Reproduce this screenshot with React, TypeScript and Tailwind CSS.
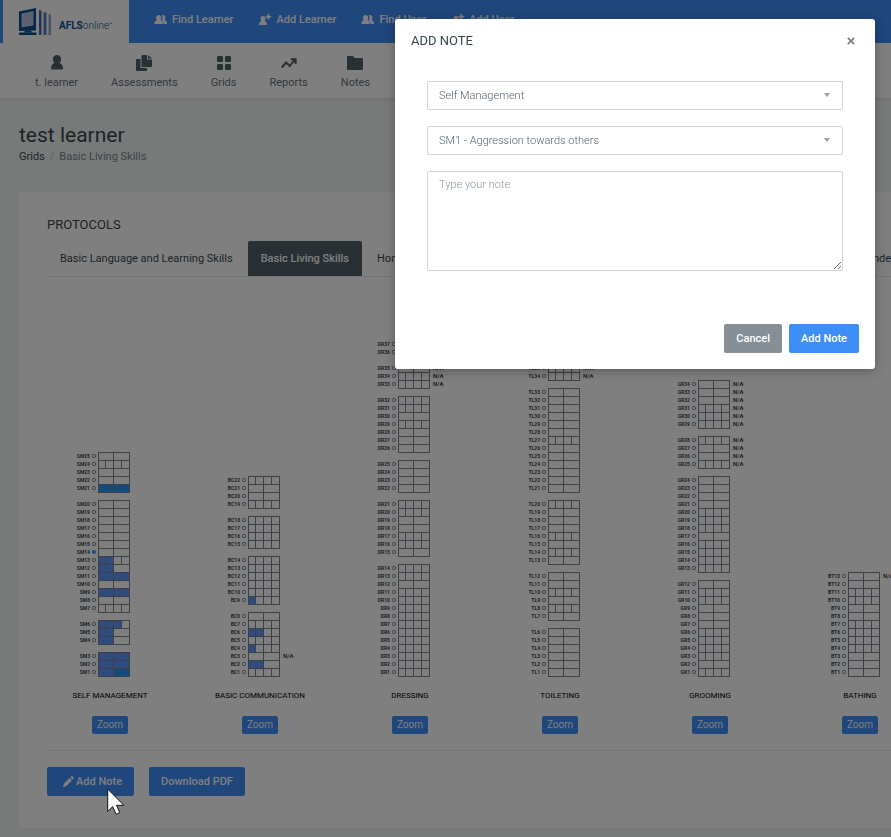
import type { ReactNode } from "react";

type Protocol = {
  title: string;
  prefix: string;
  groups: string[]; // one string per block, top row first, digit = boxes in the row
  fills?: Record<number, string[]>;
  na?: number[];
  dots?: number[];
};

const A = "#6296ff";
const B = "#2a96f5";

const protocols: Protocol[] = [
  {
    title: "SELF MANAGEMENT",
    prefix: "SM",
    groups: ["24222", "22222224222224", "422", "222"],
    fills: {
      21: [B, B],
      13: [A, A],
      12: [A],
      11: [A, A],
      9: [A, A],
      6: [A, A, A],
      5: [A],
      4: [A],
      3: [A, A],
      2: [A, A],
      1: [A, B],
    },
    dots: [14],
  },
  {
    title: "BASIC COMMUNICATION",
    prefix: "BC",
    groups: ["4224", "4444", "444444", "24444224"],
    fills: { 9: [A], 6: [A, A], 4: [A], 2: [A] },
    na: [3],
  },
  {
    title: "DRESSING",
    prefix: "DR",
    groups: ["22", "244", "4424222", "2222", "4422442", "44244444444444"],
    na: [35, 34, 33],
  },
  {
    title: "TOILETING",
    prefix: "TL",
    groups: ["44", "2222224222222", "42224242", "224242", "222222"],
    na: [35, 34],
  },
  {
    title: "GROOMING",
    prefix: "GR",
    groups: ["222444", "4224", "222244424444", "244222444424"],
    na: [34, 33, 32, 31, 30, 29, 28, 27, 26, 25],
  },
  {
    title: "BATHING",
    prefix: "BT",
    groups: ["2244224444222"],
    na: [13],
  },
];

const tabs = [
  "Basic Language and Learning Skills",
  "Basic Living Skills",
  "Home Skills",
  "Community Participation Skills",
  "School Skills",
  "Vocational Skills",
  "Independent Living Skills",
];

const LINE = "#76838f";
const EDGES: Record<string, number[]> = {
  "2": [0, 15, 31],
  "4": [0, 7, 15, 23, 31],
};

function ProtocolChart({ protocol }: { protocol: Protocol }) {
  const { groups, prefix, fills = {}, na = [], dots = [] } = protocol;
  const total = groups.join("").length;
  const height = (total + groups.length - 1) * 8 + 1;
  const rows: ReactNode[] = [];
  let y = 0;
  let n = total;

  groups.forEach((group) => {
    for (const kind of group) {
      const edges = EDGES[kind];
      const id = n;
      rows.push(
        <g key={id} transform={`translate(0 ${y})`}>
          <text x="55" y="6" textAnchor="end" fontSize="5" fontWeight="700" fill="#37474f">
            {prefix + id}
          </text>
          <circle
            cx="59"
            cy="4"
            r="1.7"
            fill={dots.includes(id) ? A : "none"}
            stroke={dots.includes(id) ? A : LINE}
            strokeWidth="0.9"
          />
          {(fills[id] || []).map((color, i) => (
            <rect key={i} x={63 + edges[i]} y="0" width={edges[i + 1] - edges[i]} height="8" fill={color} />
          ))}
          <path
            d={`M63 .5h32M63 8.5h32${edges.map((e) => `M${63.5 + e} 0v9`).join("")}`}
            stroke={LINE}
            fill="none"
          />
          {na.includes(id) && (
            <text x="98" y="6" fontSize="6" fontWeight="700" fill="#37474f">
              N/A
            </text>
          )}
        </g>
      );
      y += 8;
      n -= 1;
    }
    y += 8;
  });

  return (
    <svg width="150" height={height} viewBox={`0 0 150 ${height}`}>
      {rows}
    </svg>
  );
}

function UsersIcon() {
  return (
    <svg className="h-3 w-[13px]" viewBox="0 0 13 12" fill="currentColor">
      <path d="M9 1c1.500 0 2.400 1.100 2.400 2.600 0 1-.4 1.900-1 2.400C12 6.600 13 7.600 13 10H9.800C9.600 8.300 9 7.200 7.700 6.400c.6-.8.900-1.700.9-2.700 0-1-.3-1.800-.8-2.400C8.200 1.100 8.600 1 9 1z" />
      <path d="M4.700 1c1.600 0 2.600 1.200 2.600 2.700 0 1-.4 1.900-1 2.400C8 6.700 9 7.800 9 10H.3c0-2.200 1.100-3.300 2.800-3.900-.6-.5-1-1.400-1-2.400C2.100 2.200 3.100 1 4.700 1z" />
    </svg>
  );
}

function UserAddIcon() {
  return (
    <svg className="h-3 w-[13px]" viewBox="0 0 13 12" fill="currentColor">
      <path d="M5 2c1.600 0 2.500 1.100 2.500 2.600 0 1-.4 1.800-1 2.300C8.200 7.500 9.200 8.700 9.200 11H.8c0-2.300 1-3.500 2.700-4.100-.6-.5-1-1.300-1-2.300C2.500 3.100 3.400 2 5 2z" />
      <path d="M9.500 0h1.600v1.800H13v1.600h-1.900v1.800H9.500V3.400H7.700V1.800h1.800z" />
    </svg>
  );
}

const menu: { label: string; icon: ReactNode }[] = [
  {
    label: "t. learner",
    icon: <path d="M8 0c2.600 0 4.100 1.900 4.100 4.200 0 1.600-.6 3-1.600 3.800C12.800 8.800 14 10.500 14 13.500c0 .6-.5 1-1.100 1H3.100c-.6 0-1.100-.4-1.100-1C2 10.500 3.200 8.800 5.500 8 4.500 7.200 3.900 5.800 3.900 4.200 3.900 1.900 5.400 0 8 0z" />,
  },
  {
    label: "Assessments",
    icon: (
      <>
        <path d="M6.500 0H11v4.500h5V11c0 .6-.4 1-1 1H6.500c-.6 0-1-.4-1-1V1c0-.6.4-1 1-1zM12 0l4 3.500h-4z" />
        <path d="M1 4h3.500v9H11v2c0 .6-.4 1-1 1H1c-.6 0-1-.4-1-1V5c0-.6.4-1 1-1z" />
      </>
    ),
  },
  {
    label: "Grids",
    icon: (
      <>
        <rect x="1" y="1" width="6" height="6" rx="1" />
        <rect x="9" y="1" width="6" height="6" rx="1" />
        <rect x="1" y="9" width="6" height="6" rx="1" />
        <rect x="9" y="9" width="6" height="6" rx="1" />
      </>
    ),
  },
  {
    label: "Reports",
    icon: (
      <path d="M.7 12.500 5 7.500l3.800 3.500 4.600-6M9.800 4.200H14.600V9" fill="none" stroke="currentColor" strokeWidth="2" />
    ),
  },
  {
    label: "Notes",
    icon: <path d="M1 1h5l1.500 2H15c.6 0 1 .4 1 1v10c0 .6-.4 1-1 1H1c-.6 0-1-.4-1-1V2c0-.6.4-1 1-1z" />,
  },
];

function Logo() {
  return (
    <a href="#" className="ml-[3px] flex h-full w-[126px] items-center bg-white pl-4">
      <svg className="h-7 w-8" viewBox="0 0 32 28">
        <path d="M0 3.500 17 0v22.500L0 23z" fill="#0b5192" />
        <path d="M2.500 5.500 14.500 3v14.500L2.500 19.500z" fill="#b9c3e4" />
        <path d="M6 22.500h6l1 2H5z" fill="#0b5192" />
        <path d="M0 24.500h17.500V27H0z" fill="#0b5192" />
        <path d="M20 2 22.500 2.500V27H20z" fill="#3c6ca8" />
        <path d="M24.500 4 27.500 4.500V27h-3z" fill="#5b82b8" />
        <path d="M29.500 6 32 6.500V27h-2.500z" fill="#8ba6d4" />
      </svg>
      <span className="ml-2 mt-2 flex whitespace-nowrap font-['Liberation_Sans_Narrow',Roboto,sans-serif] text-[10px] leading-4 text-[#0b5192]">
        <b>AFLS</b>
        <span className="font-light">online</span>
        <span className="text-[5px] leading-3">™</span>
      </span>
    </a>
  );
}

function SelectField({ label, value }: { label: string; value: string }) {
  return (
    <div className="relative">
      <select
        aria-label={label}
        defaultValue={value}
        className="block h-[29px] w-full appearance-none rounded-xs border border-[#ccd5d8] bg-white px-[11px] text-[11px] font-light text-[#566370] outline-none"
      >
        <option>{value}</option>
      </select>
      <span className="pointer-events-none absolute right-[13px] top-3 border-x-[3px] border-t-4 border-x-transparent border-t-[#93a0a8]" />
    </div>
  );
}

function AddNoteModal() {
  return (
    <div className="fixed inset-0 flex items-start justify-end bg-black/50 px-4 py-[19px]">
      <div role="dialog" aria-labelledby="note-title" className="w-[480px] rounded-[3px] bg-white shadow-[0_2px_12px_rgba(0,0,0,0.3)]">
        <div className="flex items-center justify-between px-4 pt-3">
          <h4 id="note-title" className="text-[13px] leading-5 text-[#37474f]">
            ADD NOTE
          </h4>
          <button type="button" aria-label="Close" className="flex h-5 w-4 items-center justify-center text-[#7f7f7f]">
            <svg className="size-2" viewBox="0 0 8 8" stroke="currentColor" strokeWidth="1.7">
              <path d="M.8.8l6.400 6.400M7.200.8L.8 7.200" />
            </svg>
          </button>
        </div>
        <div className="flex flex-col gap-4 px-8 pt-[30px]">
          <SelectField label="Protocol" value="Self Management" />
          <SelectField label="Skill" value="SM1 - Aggression towards others" />
          <textarea
            aria-label="Note"
            placeholder="Type your note"
            className="block h-[100px] w-full rounded-xs border border-[#ccd5d8] px-[11px] py-[5px] text-[11px] font-light leading-4 text-[#566370] outline-none placeholder:text-[#8795a1]"
          />
        </div>
        <div className="flex justify-end gap-[7px] px-4 pb-4 pt-[53px]">
          <button type="button" className="h-[29px] rounded-xs bg-[#868e96] px-3 text-[11px] font-medium text-white">
            Cancel
          </button>
          <button type="button" className="h-[29px] rounded-xs bg-[#3e8ef7] px-3 text-[11px] font-medium text-white">
            Add Note
          </button>
        </div>
      </div>
    </div>
  );
}

export default function App() {
  return (
    <div className="min-h-screen overflow-hidden bg-[#f1f4f5] font-[Roboto,sans-serif] text-[11px] leading-4 text-[#37474f]">
      <header>
        <nav className="flex h-[43px] items-center bg-[#3e8ef7] font-medium text-white">
          <Logo />
          <div className="ml-[25px] flex gap-[25px] whitespace-nowrap pb-1">
            {["Find Learner", "Add Learner", "Find User", "Add User"].map((label) => (
              <a key={label} href="#" className="flex items-center gap-[5px]">
                {label.startsWith("Find") ? <UsersIcon /> : <UserAddIcon />}
                {label}
              </a>
            ))}
          </div>
        </nav>
        <nav className="flex h-14 gap-[33px] border-b border-[#dfe4e6] bg-white pl-[35px] pt-3 text-[#65727c] shadow-xs">
          {menu.map((item) => (
            <a key={item.label} href="#" className="flex flex-col items-center gap-1">
              <svg className="size-4 text-[#526069]" viewBox="0 0 16 16" fill="currentColor">
                {item.icon}
              </svg>
              {item.label}
            </a>
          ))}
        </nav>
      </header>

      <main className="min-w-[1000px] pl-[19px]">
        <div className="pb-[27px] pt-6">
          <h1 className="text-[21px] leading-6">test learner</h1>
          <ol className="flex gap-[5px] pt-0.5">
            <li>
              <a href="#">Grids</a>
            </li>
            <li className="text-[#b5bfc5]">/</li>
            <li className="text-[#76838f]">Basic Living Skills</li>
          </ol>
        </div>

        <section className="rounded-[3px] bg-white px-7 pb-8 pt-[23px] shadow-xs">
          <h3 className="text-[13px] leading-5">PROTOCOLS</h3>
          <div className="mt-1.5 flex gap-0.5 border-b border-[#e4eaec]">
            {tabs.map((tab, i) => (
              <a
                key={tab}
                href="#"
                className={
                  i === 1
                    ? "whitespace-nowrap rounded-t-xs bg-[#526069] px-[13px] pb-[9px] pt-[10px] font-medium text-white"
                    : "whitespace-nowrap px-[13px] pb-[9px] pt-[10px]"
                }
              >
                {tab}
              </a>
            ))}
          </div>

          <div className="-ml-3 flex min-h-[457px] items-end">
            {protocols.map((p) => (
              <div key={p.prefix} className="flex w-[150px] shrink-0 flex-col items-center">
                <ProtocolChart protocol={p} />
                <div className="mt-[11px] whitespace-nowrap text-[8px] leading-4 text-black">{p.title}</div>
                <button type="button" className="mt-3 h-[18px] w-9 rounded-xs bg-[#3e8ef7] text-[10px] leading-4 text-white">
                  Zoom
                </button>
              </div>
            ))}
          </div>

          <div className="mt-4 flex gap-[15px] border-t border-[#e4eaec] pt-4 font-medium text-white">
            <button type="button" className="flex h-[29px] items-center gap-0.5 rounded-xs bg-[#3e8ef7] pl-[15px] pr-3">
              <svg className="size-3" viewBox="0 0 12 12" fill="currentColor">
                <path d="M1 11l.8-3.200L7.500 2.100l2.400 2.400-5.700 5.700zM8.300 1.300l.9-.9c.4-.4.9-.4 1.300 0l1.100 1.100c.4.4.4.9 0 1.300l-.9.9z" />
              </svg>
              Add Note
            </button>
            <button type="button" className="h-[29px] rounded-xs bg-[#3e8ef7] px-3">
              Download PDF
            </button>
          </div>
        </section>
      </main>

      <AddNoteModal />

      <svg className="pointer-events-none absolute left-[107px] top-[788px] h-[27px] w-[18px]" viewBox="0 0 18 27">
        <path
          d="M.7 1v22.400l5-4.700 3.400 7.600 3.700-1.600-3.300-7.400h7.300z"
          fill="#fff"
          stroke="#10101c"
          strokeWidth="1"
        />
      </svg>
    </div>
  );
}
